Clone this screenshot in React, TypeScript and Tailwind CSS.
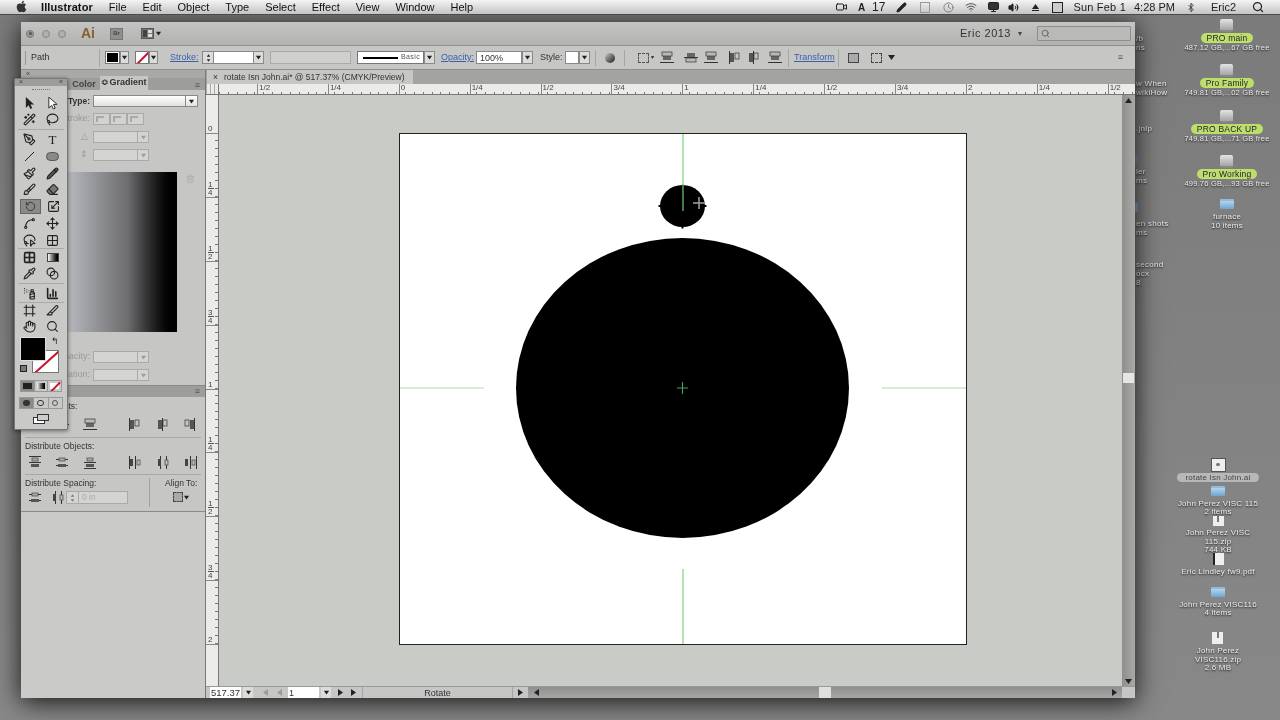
import type { ReactNode } from 'react';
import {
  Bluetooth, Blend, ChartColumn, Clock, Eraser, Frame, Grid2x2, Hand, Lasso, LassoSelect, Paintbrush, Pencil, PenTool,
  Pipette, Search, Slice, Spline, SprayCan, Trash2, Video, Volume2, WandSparkles, Wifi, Monitor, Brush, Move, Scaling, RotateCcw,
} from 'lucide-react';
import { FaApple } from 'react-icons/fa';

const menus = ['File', 'Edit', 'Object', 'Type', 'Select', 'Effect', 'View', 'Window', 'Help'];
const hRuler = ['1/2', '1/4', '0', '1/4', '1/2', '3/4', '1', '1/4', '1/2', '3/4', '2', '1/4', '1/2'];
const vRuler = [['0'], ['1', '4'], ['1', '2'], ['3', '4'], ['1'], ['1', '4'], ['1', '2'], ['3', '4'], ['2']];
const disks = [
  ['PRO main', '487.12 GB,...67 GB free'],
  ['Pro Family', '749.81 GB,...02 GB free'],
  ['PRO BACK UP', '749.81 GB,...71 GB free'],
  ['Pro Working', '499.76 GB,...93 GB free'],
];

function Tri({ dir = 'down', className = '' }: { dir?: 'down' | 'up' | 'left' | 'right'; className?: string }) {
  const points = { down: '0,1 7,1 3.5,6', up: '0,6 7,6 3.5,1', left: '6,0 6,7 1,3.5', right: '1,0 1,7 6,3.5' }[dir];
  return (
    <svg viewBox="0 0 7 7" className={`w-[7px] h-[7px] fill-[#222] ${className}`}>
      <polygon points={points} />
    </svg>
  );
}

function Drop({ w = 'w-[11px]' }: { w?: string }) {
  return (
    <div className={`${w} h-[13px] bg-[#dcdcda] border border-[#8a8a88] flex items-center justify-center shrink-0`}>
      <Tri className="scale-75" />
    </div>
  );
}

function AlignGlyph({ mode, pos }: { mode: 'h' | 'v'; pos: number }) {
  // pos 0/1/2 = which edge the two boxes sit on
  const line = pos === 0 ? 1 : pos === 1 ? 6 : 11;
  return (
    <svg viewBox="0 0 14 13" className="w-[14px] h-[13px] shrink-0">
      {mode === 'h' ? (
        <g>
          <rect x="3" y={pos === 2 ? 5 : 2} width="8" height="4" fill="#666" />
          <rect x="2" y={pos === 2 ? 1 : 7} width="10" height="4" fill="#b9b9b7" stroke="#444" strokeWidth="0.8" />
          <rect x="0" y={line} width="14" height="1" fill="#333" />
        </g>
      ) : (
        <g>
          <rect x={pos === 2 ? 7 : 2} y="2" width="4" height="9" fill="#555" />
          <rect x={pos === 2 ? 2 : 7} y="2" width="4" height="6" fill="#c4c4c2" stroke="#444" strokeWidth="0.8" />
          <rect x={line} y="0" width="1" height="13" fill="#333" />
        </g>
      )}
    </svg>
  );
}

function DistGlyph({ mode, pos }: { mode: 'h' | 'v'; pos: number }) {
  const off = pos * 3;
  return (
    <svg viewBox="0 0 14 13" className="w-[14px] h-[13px] shrink-0">
      {mode === 'h' ? (
        <g>
          <rect x="1" y={off} width="12" height="1" fill="#333" />
          <rect x="1" y={off + 6} width="12" height="1" fill="#333" />
          <rect x="4" y="2" width="6" height="3" fill="#aaa" stroke="#444" strokeWidth="0.7" />
          <rect x="3" y="8" width="8" height="3" fill="#555" />
        </g>
      ) : (
        <g>
          <rect x={off + 1} y="0" width="1" height="13" fill="#333" />
          <rect x={off + 7} y="0" width="1" height="13" fill="#333" />
          <rect x="2" y="3" width="3" height="7" fill="#444" />
          <rect x="9" y="4" width="3" height="5" fill="#bbb" stroke="#444" strokeWidth="0.7" />
        </g>
      )}
    </svg>
  );
}

function MenuBar() {
  return (
    <div className="h-[15px] shrink-0 flex items-center bg-gradient-to-b from-[#f4f4f4] to-[#c4c4c4] border-b border-[#4a4a4a] text-[11px] text-[#111] pl-[15px] z-20 relative">
      <FaApple className="w-[13px] h-[13px] text-[#333] -mt-px" />
      <span className="font-bold ml-[13px] mr-[16px] tracking-[0.1px]">Illustrator</span>
      <div className="flex gap-[16px]">
        {menus.map((m) => (
          <span key={m}>{m}</span>
        ))}
      </div>
      <div className="ml-auto flex items-center text-[#222]">
        <Video className="w-[13px] h-[12px] mr-[10px]" />
        <span className="mr-[11px] flex items-center gap-[2px] text-[12px]"><b className="text-[10px] w-[12px]">A</b>17</span>
        <Pencil className="w-[11px] h-[11px] mr-[13px]" fill="#222" />
        <div className="w-[10px] h-[11px] border border-[#999] mr-[13px]" />
        <Clock className="w-[11px] h-[11px] text-[#777] mr-[10px]" />
        <Wifi className="w-[14px] h-[12px] text-[#555] mr-[9px]" />
        <Monitor className="w-[13px] h-[12px] mr-[8px]" fill="#333" />
        <Volume2 className="w-[11px] h-[11px] mr-[13px]" fill="#222" />
        <span className="flex flex-col items-center mr-[13px]">
          <Tri dir="up" />
          <span className="block w-[7px] h-px bg-[#222]" />
        </span>
        <div className="w-[11px] h-[11px] border border-[#222] bg-[#ccc] mr-[10px]" />
        <span className="mr-[8px] tracking-[0.2px]">Sun Feb 1</span>
        <span className="mr-[11px]">4:28 PM</span>
        <Bluetooth className="w-[10px] h-[11px] mr-[15px]" />
        <span className="mr-[16px]">Eric2</span>
        <Search className="w-[12px] h-[12px] mr-[16px]" strokeWidth={2.5} />
      </div>
    </div>
  );
}

function TitleBar() {
  return (
    <div className="h-[24px] shrink-0 flex items-center bg-gradient-to-b from-[#c4c4c2] to-[#b2b2b0] border-b border-[#8f8f8d] rounded-t-[3px] pl-[5px]">
      <div className="flex gap-[8px]">
        <div className="w-[8px] h-[8px] rounded-full border border-[#777] bg-[#9a9a98] flex items-center justify-center"><div className="w-[3px] h-[3px] rounded-full bg-[#555]" /></div>
        <div className="w-[8px] h-[8px] rounded-full border border-[#888] bg-[#b0b0ae]" />
        <div className="w-[8px] h-[8px] rounded-full border border-[#888] bg-[#b0b0ae]" />
      </div>
      <span className="ml-[15px] font-bold text-[14px] text-[#86602f]">Ai</span>
      <div className="ml-[15px] w-[13px] h-[12px] bg-[#8f8f8d] border border-[#777] text-[6px] font-bold text-[#444] flex items-center justify-center">Br</div>
      <div className="ml-[18px] w-[13px] h-[11px] border border-[#555] bg-[#777] grid grid-cols-2 gap-px p-px">
        <div className="bg-[#444] row-span-2" />
        <div className="bg-[#ddd]" />
        <div className="bg-[#ddd]" />
      </div>
      <Tri className="ml-[1px] scale-75" />
      <span className="ml-auto text-[11px] text-[#333] tracking-[0.5px]">Eric 2013</span>
      <span className="ml-[7px] text-[#444] text-[8px]">▾</span>
      <div className="ml-[15px] mr-[4px] w-[94px] h-[15px] border border-[#8d8d8b] bg-[#b9b9b7] rounded-[1px] flex items-center pl-[3px]">
        <Search className="w-[9px] h-[9px] text-[#555]" />
      </div>
    </div>
  );
}

function ControlBar() {
  return (
    <div className="h-[24px] shrink-0 flex items-center bg-[#c6c7c4] border-b border-[#8f8f8d] text-[9px] text-[#333]">
      <div className="w-px h-[14px] bg-[#999] ml-[4px]" />
      <span className="ml-[5px] w-[69px]">Path</span>
      <div className="w-px h-[18px] bg-[#a5a5a3] -ml-[1px]" />
      <div className="ml-[5px] w-[15px] h-[13px] border border-[#777] bg-white p-px"><div className="w-full h-full bg-black" /></div>
      <Drop w="w-[9px]" />
      <div className="ml-[6px] w-[14px] h-[13px] border border-[#777] bg-white relative overflow-hidden">
        <div className="absolute left-[-2px] top-[5px] w-[18px] h-[1.5px] bg-[#c8102e] -rotate-45" />
      </div>
      <Drop w="w-[9px]" />
      <span className="ml-[12px] w-[32px] text-[#3a5fb0] underline">Stroke:</span>
      <div className="w-[12px] h-[13px] border border-[#888] bg-[#dcdcda] flex flex-col items-center justify-center">
        <Tri dir="up" className="scale-50 -my-px" />
        <Tri className="scale-50 -my-px" />
      </div>
      <div className="w-[39px] h-[13px] bg-white border-y border-[#888]" />
      <Drop />
      <div className="ml-[6px] w-[81px] h-[13px] border border-[#aaa] bg-[#cfd0cd]" />
      <div className="ml-[6px] w-[67px] h-[13px] bg-white border border-[#777] flex items-center pl-[5px]">
        <div className="w-[35px] h-[2px] bg-black" />
        <span className="ml-[3px] text-[7px] text-[#555] tracking-[0.4px]">Basic</span>
      </div>
      <Drop />
      <span className="ml-[6px] w-[35px] text-[#3a5fb0] underline">Opacity:</span>
      <div className="w-[46px] h-[13px] bg-white border border-[#888] pl-[3px] leading-[12px]">100%</div>
      <Drop />
      <span className="ml-[7px] w-[25px]">Style:</span>
      <div className="w-[14px] h-[13px] bg-white border border-[#888]" />
      <Drop />
      <div className="w-px h-[16px] bg-[#a5a5a3] ml-[5px]" />
      <div className="ml-[9px] w-[10px] h-[10px] rounded-full bg-gradient-to-br from-[#ccc] to-[#222]" />
      <div className="w-px h-[16px] bg-[#a5a5a3] ml-[9px]" />
      <div className="ml-[13px] w-[11px] h-[10px] border border-dashed border-[#555]" />
      <Tri className="scale-50" />
      <div className="ml-[4px] flex">
        <AlignGlyph mode="h" pos={2} />
        <div className="ml-[10px]"><AlignGlyph mode="h" pos={1} /></div>
        <div className="ml-[6px]"><AlignGlyph mode="h" pos={2} /></div>
      </div>
      <div className="ml-[10px] flex">
        <AlignGlyph mode="v" pos={0} />
        <div className="ml-[5px]"><AlignGlyph mode="v" pos={1} /></div>
        <div className="ml-[7px]"><AlignGlyph mode="h" pos={2} /></div>
      </div>
      <div className="w-px h-[18px] bg-[#a5a5a3] ml-[6px]" />
      <span className="ml-[5px] w-[39px] text-[#3a5fb0] underline">Transform</span>
      <div className="w-px h-[18px] bg-[#a5a5a3] ml-[5px]" />
      <div className="ml-[9px] w-[11px] h-[10px] border border-[#444] bg-[#aaa]" />
      <div className="ml-[12px] w-[11px] h-[10px] border border-dashed border-[#444]" />
      <Tri className="ml-[6px]" />
      <div className="ml-auto mr-[12px] text-[#555] text-[9px] leading-none">≡</div>
    </div>
  );
}

function Sel({ off = false }: { off?: boolean }) {
  return (
    <div className="ml-[3px] w-[56px] h-[12px] border border-[#aaa] bg-[#d4d5d2] flex justify-end">
      <div className="w-[11px] border-l border-[#aaa] flex items-center justify-center">
        <Tri className={`scale-75 ${off ? 'opacity-30' : ''}`} />
      </div>
    </div>
  );
}

function DockPanel() {
  return (
    <div className="w-[185px] shrink-0 flex flex-col bg-[#c6c7c4] text-[9px] text-[#333] border-r border-[#777]">
      <div className="h-[8px] bg-[#a9a9a7] text-[7px] leading-[7px] pl-[5px] text-[#444]">«</div>
      <div className="h-[12px] bg-[#9d9d9b] flex items-end pl-[47px] font-bold">
        <span className="w-[32px] text-center text-[#444] leading-[12px]">Color</span>
        <span className="w-[48px] text-center bg-[#c6c7c4] h-[14px] -mt-[2px] leading-[13px] whitespace-nowrap">≎Gradient</span>
        <span className="ml-auto mr-[5px] text-[#555] leading-[10px]">≡</span>
      </div>
      <div className="h-[296px] flex flex-col border-b border-[#8a8a88]">
        <div className="flex items-center mt-[5px] h-[12px]">
          <span className="w-[69px] text-right font-bold text-[8.5px]">Type:</span>
          <div className="ml-[3px] w-[105px] h-[12px] border border-[#888] bg-gradient-to-b from-white to-[#e2e2e0] flex justify-end">
            <div className="w-[12px] border-l border-[#888] flex items-center justify-center"><Tri className="scale-75" /></div>
          </div>
        </div>
        <div className="flex items-center mt-[6px] h-[12px] text-[#999]">
          <span className="w-[69px] text-right">Stroke:</span>
          <div className="ml-[3px] flex">
            {[0, 1, 2].map((i) => (
              <div key={i} className="w-[17px] h-[12px] border border-[#aaa] bg-[#d2d3d0] p-[2px]">
                <div className="w-[8px] h-[6px] border-t-2 border-l-2 border-[#aaa]" />
              </div>
            ))}
          </div>
        </div>
        <div className="flex items-center mt-[6px] h-[12px]">
          <span className="w-[69px] text-right text-[#999] pr-[2px]">△</span>
          <Sel off />
        </div>
        <div className="flex items-center mt-[6px] h-[12px]">
          <span className="w-[69px] text-right text-[#999] pr-[2px]">⇕</span>
          <Sel off />
        </div>
        <div className="flex mt-[11px] pl-[47px]">
          <div className="w-[109px] h-[160px] bg-gradient-to-r from-[#b7b9be] via-[#6d6d6f] via-55% to-black" />
          <Trash2 className="ml-[9px] mt-[2px] w-[9px] h-[10px] text-[#aaa]" />
        </div>
        <div className="flex items-center mt-[19px] h-[12px] text-[#999]">
          <span className="w-[69px] text-right">Opacity:</span>
          <Sel off />
        </div>
        <div className="flex items-center mt-[6px] h-[12px] text-[#999]">
          <span className="w-[69px] text-right">Location:</span>
          <Sel off />
        </div>
      </div>
      <div className="h-[11px] bg-[#9d9d9b] flex justify-end pr-[5px] text-[#555] leading-[10px]">≡</div>
      <div className="h-[115px] flex flex-col border-b border-[#8a8a88] px-[4px] text-[8.5px]">
        <span className="mt-[4px] leading-[11px]">Align Objects:</span>
        <div className="flex items-center mt-[4px] ml-[3px] h-[16px]">
          <AlignGlyph mode="h" pos={0} />
          <div className="ml-[13px]"><AlignGlyph mode="h" pos={1} /></div>
          <div className="ml-[14px]"><AlignGlyph mode="h" pos={2} /></div>
          <div className="ml-[31px]"><AlignGlyph mode="v" pos={0} /></div>
          <div className="ml-[14px]"><AlignGlyph mode="v" pos={1} /></div>
          <div className="ml-[13px]"><AlignGlyph mode="v" pos={2} /></div>
        </div>
        <div className="h-px bg-[#a8a8a6] mt-[5px]" />
        <span className="mt-[3px] leading-[11px]">Distribute Objects:</span>
        <div className="flex items-center mt-[2px] ml-[3px] h-[16px]">
          <DistGlyph mode="h" pos={0} />
          <div className="ml-[13px]"><DistGlyph mode="h" pos={1} /></div>
          <div className="ml-[14px]"><DistGlyph mode="h" pos={2} /></div>
          <div className="ml-[31px]"><DistGlyph mode="v" pos={0} /></div>
          <div className="ml-[14px]"><DistGlyph mode="v" pos={1} /></div>
          <div className="ml-[13px]"><DistGlyph mode="v" pos={2} /></div>
        </div>
        <div className="h-px bg-[#a8a8a6] mt-[4px]" />
        <div className="flex mt-[3px]">
          <div className="flex flex-col w-[125px] border-r border-[#a0a09e] h-[29px] shrink-0">
            <span className="leading-[11px]">Distribute Spacing:</span>
            <div className="flex items-center mt-[2px] ml-[3px]">
              <DistGlyph mode="h" pos={1} />
              <div className="ml-[9px]"><DistGlyph mode="v" pos={1} /></div>
              <div className="ml-[1px] w-[62px] h-[13px] border border-[#aaa] bg-[#d4d5d2] flex items-center text-[#aaa]">
                <div className="w-[12px] h-full border-r border-[#aaa] flex flex-col items-center justify-center">
                  <Tri dir="up" className="scale-50 -my-px opacity-50" />
                  <Tri className="scale-50 -my-px opacity-50" />
                </div>
                <span className="ml-[3px]">0 in</span>
              </div>
            </div>
          </div>
          <div className="flex flex-col items-center ml-[15px] whitespace-nowrap">
            <span className="leading-[11px]">Align To:</span>
            <div className="flex items-center mt-[3px]">
              <div className="w-[10px] h-[10px] border border-dashed border-[#444] bg-[#aaa]" />
              <Tri className="scale-75" />
            </div>
          </div>
        </div>
      </div>
      <div className="flex-1 bg-[#cacbc8]" />
    </div>
  );
}

function Rulers() {
  return (
    <div className="h-[11px] shrink-0 flex bg-[#ebebe9] border-b border-[#777] text-[8px] text-[#444]">
      <div className="w-[13px] shrink-0 border-r border-[#777] bg-[repeating-linear-gradient(90deg,#aaa_0,#aaa_1px,transparent_1px,transparent_4px)]" />
      <div className="flex-1 overflow-hidden pl-[38px] flex bg-[repeating-linear-gradient(90deg,#777_0,#777_1px,transparent_1px,transparent_8.86px)] bg-[length:100%_2px] bg-bottom bg-no-repeat">
        {hRuler.map((t, i) => (
          <div key={i} className="w-[70.9px] shrink-0 border-l border-[#888] pl-[1px] leading-[8px]">{t}</div>
        ))}
      </div>
    </div>
  );
}

function VRuler() {
  return (
    <div className="w-[13px] shrink-0 bg-[#ebebe9] border-r border-[#777] flex flex-col text-[8px] leading-[7px] text-[#444] overflow-hidden">
      <div className="shrink-0 h-[39px] border-b border-[#888] flex flex-col justify-end pl-[2px] pb-[1px]">0</div>
      {vRuler.slice(1).map((t, i) => (
        <div key={i} className="shrink-0 h-[63.9px] border-b border-[#888] flex flex-col justify-end pl-[2px] pb-[1px] bg-[repeating-linear-gradient(0deg,#777_0,#777_1px,transparent_1px,transparent_8px)] bg-[length:3px_100%] bg-right bg-no-repeat">
          {t.length === 2 ? (
            <>
              <span className="border-b border-[#555] w-[6px] leading-[7px]">{t[0]}</span>
              <span className="leading-[7px]">{t[1]}</span>
            </>
          ) : (
            t[0]
          )}
        </div>
      ))}
    </div>
  );
}

function Artboard() {
  return (
    <div className="ml-[180px] mt-[38px] w-[568px] h-[512px] bg-white border border-[#222] shrink-0">
      <svg viewBox="0 0 566 510" className="w-[566px] h-[510px]">
        <line x1="283" y1="0" x2="283" y2="78" stroke="#7fd27f" strokeWidth="1.2" />
        <line x1="283" y1="435" x2="283" y2="510" stroke="#7fd27f" strokeWidth="1.2" />
        <line x1="0" y1="254" x2="84" y2="254" stroke="#a9dfa9" strokeWidth="1" />
        <line x1="482" y1="254" x2="566" y2="254" stroke="#a9dfa9" strokeWidth="1" />
        <ellipse cx="282.5" cy="72" rx="22.5" ry="21" fill="#000" />
        <rect x="258.5" y="71" width="2" height="2" fill="#000" />
        <rect x="304.5" y="71" width="2" height="2" fill="#000" />
        <rect x="281.5" y="92.5" width="2" height="2" fill="#000" />
        <line x1="283" y1="50" x2="283" y2="77" stroke="#6fcf6f" strokeWidth="1.2" />
        <ellipse cx="282.5" cy="254" rx="166.5" ry="150" fill="#000" />
        <line x1="277" y1="254" x2="288" y2="254" stroke="#3fa85f" strokeWidth="1" />
        <line x1="282.5" y1="248" x2="282.5" y2="260" stroke="#3fa85f" strokeWidth="1" />
        <g stroke="#999" strokeWidth="1.6">
          <line x1="293" y1="69" x2="305" y2="69" />
          <line x1="299" y1="63" x2="299" y2="75" />
        </g>
      </svg>
    </div>
  );
}

function StatusBar() {
  return (
    <div className="h-[12px] shrink-0 flex items-center bg-[#c6c7c4] border-t border-[#999] text-[9px] text-[#333] pl-[4px]">
      <div className="w-[31px] h-full bg-white pl-[1px] leading-[12px] text-[9.5px]">517.37</div>
      <div className="ml-[2px] w-[10px] h-full bg-[#dcdcda] flex items-center justify-center"><Tri className="scale-75" /></div>
      <div className="ml-[9px] flex gap-[7px] opacity-25">
        <Tri dir="left" />
        <Tri dir="left" />
      </div>
      <div className="ml-[5px] w-[31px] h-full bg-white pl-[1px] leading-[12px]">1</div>
      <div className="ml-[2px] w-[10px] h-full bg-[#dcdcda] flex items-center justify-center"><Tri className="scale-75" /></div>
      <div className="ml-[6px] flex gap-[6px]">
        <Tri dir="right" />
        <Tri dir="right" />
      </div>
      <div className="ml-[5px] w-[151px] h-full border-x border-[#a5a5a3] text-center leading-[13px]">Rotate</div>
      <div className="w-[15px] flex justify-center"><Tri dir="right" /></div>
      <div className="flex-1 h-full bg-gradient-to-b from-[#8f8f8d] to-[#a7a7a5] flex items-center pl-[5px] pr-[4px]">
        <Tri dir="left" />
        <div className="ml-[279px] w-[12px] h-full bg-[#e0e0de]" />
        <Tri dir="right" className="ml-auto" />
      </div>
      <div className="w-[13px] h-full bg-[#c6c7c4]" />
    </div>
  );
}

function ToolRow({ children, mt = 'mt-[0.8px]' }: { children: ReactNode; mt?: string }) {
  return <div className={`h-[16px] shrink-0 flex items-center justify-around px-[3px] ${mt}`}>{children}</div>;
}

const tool = 'w-[13px] h-[13px] text-[#222]';

function ToolsPanel() {
  return (
    <div className="absolute left-[-7px] top-[56px] w-[54px] h-[352px] bg-[#c9cac7] border border-[#777] shadow-[0_1px_4px_rgba(0,0,0,0.5)] z-10 flex flex-col rounded-t-[2px]">
      <div className="h-[7px] shrink-0 bg-[#9d9d9b] text-[7px] leading-[6px] text-[#444] flex justify-between px-[4px]"><span>×</span><span>«</span></div>
      <div className="h-[1px] shrink-0 mx-[17px] mt-[3px] mb-[5px] border-t border-dotted border-[#777]" />
      <ToolRow>
        <svg viewBox="0 0 12 14" className="w-[11px] h-[13px] fill-[#222]"><polygon points="2,0 2,12 5,9 7,13 9,12 7,8 11,8" /></svg>
        <svg viewBox="0 0 12 14" className="w-[11px] h-[13px] fill-white stroke-[#222]"><polygon points="2,0 2,12 5,9 7,13 9,12 7,8 11,8" /></svg>
      </ToolRow>
      <ToolRow mt="mt-0">
        <WandSparkles className={tool} />
        <Lasso className={tool} />
      </ToolRow>
      <div className="h-px shrink-0 bg-[#aaa] mx-[3px] mt-[1px] mb-[1px]" />
      <ToolRow>
        <PenTool className={tool} />
        <span className="w-[13px] text-center text-[13px] leading-[14px] text-[#222] [font-family:'Liberation_Serif',serif]">T</span>
      </ToolRow>
      <ToolRow>
        <svg viewBox="0 0 13 13" className={tool}><line x1="2" y1="11" x2="11" y2="2" stroke="#222" /></svg>
        <div className="w-[13px] h-[9px] rounded-full bg-[#8a8a88] border border-[#555]" />
      </ToolRow>
      <ToolRow>
        <Paintbrush className={tool} />
        <Pencil className={tool} fill="#555" />
      </ToolRow>
      <ToolRow>
        <Brush className={tool} />
        <Eraser className={tool} fill="#777" />
      </ToolRow>
      <ToolRow>
        <div className="w-[21px] h-[15px] -mx-[3px] bg-[#8a8a88] border border-[#666] flex items-center justify-center">
          <RotateCcw className="w-[11px] h-[11px] text-[#333]" />
        </div>
        <Scaling className={tool} />
      </ToolRow>
      <ToolRow>
        <Spline className={tool} />
        <Move className={tool} />
      </ToolRow>
      <ToolRow>
        <LassoSelect className={tool} />
        <Grid2x2 className={tool} />
      </ToolRow>
      <div className="h-px shrink-0 bg-[#aaa] mx-[3px] -mb-px" />
      <ToolRow>
        <Grid2x2 className={tool} strokeWidth={3} />
        <div className="w-[12px] h-[9px] border border-[#444] bg-gradient-to-r from-white to-black" />
      </ToolRow>
      <ToolRow mt="mt-0">
        <Pipette className={tool} />
        <Blend className={tool} />
      </ToolRow>
      <div className="h-px shrink-0 bg-[#aaa] mx-[3px] mt-[1.5px] mb-[1.5px]" />
      <ToolRow>
        <SprayCan className={tool} />
        <ChartColumn className={tool} strokeWidth={3} />
      </ToolRow>
      <div className="h-px shrink-0 bg-[#aaa] mx-[3px] -mb-px" />
      <ToolRow>
        <Frame className={tool} />
        <Slice className={tool} />
      </ToolRow>
      <ToolRow mt="mt-0">
        <Hand className={tool} />
        <Search className={tool} />
      </ToolRow>
      <div className="relative h-[40px] mt-[2px] shrink-0">
        <div className="absolute left-[17px] top-[13px] w-[27px] h-[23px] bg-white border border-[#777] overflow-hidden">
          <div className="absolute left-[-4px] top-[10px] w-[36px] h-[2px] bg-[#c8102e] -rotate-[42deg]" />
        </div>
        <div className="absolute left-[5px] top-0 w-[26px] h-[24px] bg-black border border-[#ddd]" />
        <span className="absolute left-[36px] top-0 text-[9px] leading-[9px] text-[#222]">↰</span>
        <div className="absolute left-[5px] top-[28px] w-[7px] h-[7px] border border-[#222] bg-[#777]" />
      </div>
      <div className="flex shrink-0 mx-[5px] mt-[3px] h-[12px] border border-[#999]">
        <div className="flex-1 bg-[#8a8a88] p-[2px]"><div className="w-full h-full bg-[#222]" /></div>
        <div className="flex-1 p-[2px] border-x border-[#999]"><div className="w-full h-full bg-gradient-to-r from-white to-black" /></div>
        <div className="flex-1 p-[2px] relative overflow-hidden">
          <div className="w-full h-full bg-white" />
          <div className="absolute left-[1px] top-[5px] w-[13px] h-[2px] bg-[#c8102e] -rotate-45" />
        </div>
      </div>
      <div className="flex shrink-0 mx-[4px] mt-[5px] h-[12px] border border-[#999]">
        <div className="flex-1 bg-[#8a8a88] flex items-center justify-center"><div className="w-[7px] h-[6px] rounded-full bg-[#333]" /></div>
        <div className="flex-1 border-x border-[#999] flex items-center justify-center"><div className="w-[7px] h-[6px] rounded-full border border-[#333]" /></div>
        <div className="flex-1 flex items-center justify-center"><div className="w-[6px] h-[6px] rounded-full border border-[#555]" /></div>
      </div>
      <div className="flex justify-center mt-[5px]">
        <div className="w-[12px] h-[7px] border border-[#333] bg-white mt-[3px]" />
        <div className="w-[12px] h-[7px] border border-[#333] bg-[#ccc] -ml-[8px]" />
      </div>
    </div>
  );
}

function Window() {
  return (
    <div className="relative ml-[21px] mt-[7px] w-[1114px] h-[676px] shrink-0 flex flex-col shadow-[0_4px_24px_rgba(0,0,0,0.85)] bg-[#c6c7c4]">
      <TitleBar />
      <ControlBar />
      <div className="flex-1 flex min-h-0">
        <DockPanel />
        <div className="flex-1 flex flex-col min-w-0">
          <div className="h-[14px] shrink-0 bg-[#a3a3a1] flex items-end pl-[1px]">
            <div className="w-[206px] h-[14px] bg-[#c6c7c4] text-[8.5px] leading-[14px] text-[#333] pl-[6px] whitespace-nowrap">
              ×<span className="ml-[6px]">rotate Isn John.ai* @ 517.37% (CMYK/Preview)</span>
            </div>
          </div>
          <Rulers />
          <div className="flex-1 flex min-h-0">
            <VRuler />
            <div className="flex-1 bg-[#c9cbc7] overflow-hidden"><Artboard /></div>
            <div className="w-[13px] shrink-0 bg-gradient-to-r from-[#8f8f8d] to-[#a9a9a7] flex flex-col items-center pt-[2px] pb-[1px]">
              <Tri dir="up" />
              <div className="mt-[269px] w-[11px] h-[10px] bg-[#e6e6e4]" />
              <Tri className="mt-auto" />
            </div>
          </div>
          <StatusBar />
        </div>
      </div>
      <ToolsPanel />
    </div>
  );
}

function Clipped({ lines, className = '' }: { lines: string[]; className?: string }) {
  return (
    <div className={className}>
      {lines.map((l) => (
        <div key={l} className="h-[9px] leading-[9px]">{l}</div>
      ))}
    </div>
  );
}

function Disk() {
  return <div className="w-[13px] h-[13px] shrink-0 rounded-[2px] bg-gradient-to-b from-[#e4e4e4] to-[#a5a5a5] border-b-2 border-[#888]" />;
}

function Folder() {
  return (
    <div className="w-[14px] h-[10px] rounded-[1px] bg-gradient-to-b from-[#b5d4ea] to-[#6fa5cf] border-t-2 border-[#8fbcdc]" />
  );
}

function Doc({ kind = 'zip' }: { kind?: 'zip' | 'zip2' | 'pdf' }) {
  if (kind === 'pdf') return <div className="w-[11px] h-[12px] bg-[#eee] border-l-2 border-[#222]" />;
  return (
    <div className={`w-[11px] bg-[#eee] flex justify-center ${kind === 'zip' ? 'h-[10px]' : 'h-[12px]'}`}>
      <div className="w-[2px] h-[6px] bg-[#777]" />
    </div>
  );
}

function DeskText({ lines }: { lines: string[] }) {
  return (
    <div className="text-center whitespace-nowrap">
      {lines.map((l) => (
        <div key={l} className="h-[8.7px] leading-[9px]">{l}</div>
      ))}
    </div>
  );
}

function DesktopIcons() {
  return (
    <div className="w-[100px] shrink-0 flex flex-col items-center text-[8px] text-[#eee] tracking-[0.2px] [text-shadow:0_1px_2px_rgba(0,0,0,0.9)]">
      <div className="h-[4px] shrink-0" />
      {disks.map(([name, info]) => (
        <div key={name} className="h-[45.3px] shrink-0 flex flex-col items-center">
          <Disk />
          <div className="mt-[1px] h-[10px] leading-[10px] px-[6px] rounded-full bg-[#bede6c] text-[#223] text-[8.5px] whitespace-nowrap [text-shadow:none]">{name}</div>
          <div className="text-[7.5px] leading-[9px] whitespace-nowrap">{info}</div>
        </div>
      ))}
      <div className="flex flex-col items-center mt-[-1px]">
        <Folder />
        <div className="mt-[3px]"><DeskText lines={['furnace', '10 items']} /></div>
      </div>
      <div className="mt-[228px] mr-[18px] flex flex-col items-center">
        <div className="flex flex-col items-center">
          <div className="w-[15px] h-[14px] bg-[#eee] border border-[#555] flex items-center justify-center">
            <div className="w-[4px] h-[3px] rounded-full bg-[#777]" />
          </div>
          <div className="mt-[1px] h-[9px] leading-[9px] w-[82px] text-center rounded-full bg-[#b8b8b8] text-[#444] [text-shadow:none]">rotate Isn John.ai</div>
        </div>
        <div className="flex flex-col items-center mt-[4px]">
          <Folder />
          <div className="mt-[3px]"><DeskText lines={['John Perez VISC 115', '2 items']} /></div>
        </div>
        <div className="flex flex-col items-center mt-0">
          <Doc />
          <div className="mt-[2px]"><DeskText lines={['John Perez VISC', '115.zip', '744 KB']} /></div>
        </div>
        <div className="flex flex-col items-center mt-[-1px]">
          <Doc kind="pdf" />
          <div className="mt-[2px]"><DeskText lines={['Eric Lindley fw9.pdf']} /></div>
        </div>
        <div className="flex flex-col items-center mt-[11px]">
          <Folder />
          <div className="mt-[3px]"><DeskText lines={['John Perez VISC116', '4 items']} /></div>
        </div>
        <div className="flex flex-col items-center mt-[15px]">
          <Doc kind="zip2" />
          <div className="mt-[2px]"><DeskText lines={['John Perez', 'VISC116.zip', '2.6 MB']} /></div>
        </div>
      </div>
    </div>
  );
}

export default function App() {
  return (
    <div className="w-[1280px] h-[720px] overflow-hidden flex flex-col bg-gradient-to-b from-[#7b7b7b] to-[#888] blur-[0.45px] [font-family:'Liberation_Sans',Arial,sans-serif]">
      <MenuBar />
      <div className="flex-1 flex min-h-0">
        <Window />
        <div className="w-[42px] shrink-0 overflow-hidden text-[8px] text-[#eee] tracking-[0.3px] [text-shadow:0_1px_2px_rgba(0,0,0,0.9)] pl-px">
          <Clipped lines={['/b', 'ns']} className="mt-[19px]" />
          <Clipped lines={['w When', 'wikiHow']} className="mt-[27px]" />
          <Clipped lines={['.jnlp']} className="mt-[27px]" />
          <div className="w-[3px] h-[9px] bg-[#6f8fb0] mt-[22px] -ml-px" />
          <Clipped lines={['ler', 'ms']} className="mt-[3px]" />
          <div className="w-[3px] h-[9px] bg-[#7fa5c8] mt-[18px] -ml-px" />
          <Clipped lines={['en shots', 'ms']} className="mt-[7px]" />
          <Clipped lines={['second', 'ocx', '8']} className="mt-[23px]" />
        </div>
        <DesktopIcons />
      </div>
    </div>
  );
}
